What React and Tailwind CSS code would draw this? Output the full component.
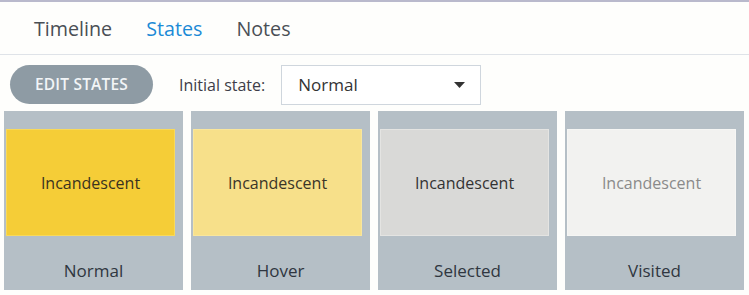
import React from "react";

const states = [
  { label: "Normal", bg: "bg-[#f5cd37]", border: "border-[#f8d95a]", text: "text-[#3a3320]" },
  { label: "Hover", bg: "bg-[#f7e08a]", border: "border-[#f9e69c]", text: "text-[#3a3528]" },
  { label: "Selected", bg: "bg-[#d9d9d7]", border: "border-[#e4e4e2]", text: "text-[#333333]" },
  { label: "Visited", bg: "bg-[#f2f2f0]", border: "border-[#f6f6f4]", text: "text-[#8a8a8a]" },
];

export default function App() {
  return (
    <div className="w-[749px] h-[295px] bg-[#fefefc] overflow-hidden border-t-2 border-[#b9b9cc]" style={{ fontFamily: '"Open Sans", "Noto Sans", sans-serif' }}>
      <div className="h-[53px] flex items-center gap-[34px] pl-[34px] border-b border-[#dfe3e8] pt-[1px]">
        <span className="text-[19.7px] text-[#4a4f55]">Timeline</span>
        <span className="text-[19.7px] text-[#1b8ad6]">States</span>
        <span className="text-[19.7px] text-[#4a4f55]">Notes</span>
      </div>
      <div className="flex items-center h-[56px] pt-[3px] pl-[10px]">
        <button className="w-[143px] h-[39px] rounded-full bg-[#8e9ba4] text-[#f2f5f7] text-[15.5px] font-semibold tracking-[0.2px]">EDIT STATES</button>
        <span className="ml-[26px] text-[16px] text-[#3d3d48]">Initial state:</span>
        <div className="ml-[16px] w-[200px] h-[40px] border border-[#cfd6dd] flex items-center justify-between pl-[16px] pr-[15px] bg-white">
          <span className="text-[17px] text-[#333]">Normal</span>
          <svg width="11" height="6" viewBox="0 0 11 6"><path d="M0 0h11L5.5 6z" fill="#333" /></svg>
        </div>
      </div>
      <div className="flex gap-[8px] pl-[4px]">
        {states.map((s) => (
          <div key={s.label} className="w-[179px] h-[179px] bg-[#b5bfc6] flex flex-col pt-[18px] pl-[2px] pr-[8px]">
            <div className={`h-[107px] w-[169px] border ${s.bg} ${s.border} flex items-center justify-center`}>
              <span className={`text-[16px] ${s.text}`}>Incandescent</span>
            </div>
            <div className="flex-1 flex items-center justify-center pl-[6px] pt-[16px]">
              <span className="text-[17px] text-[#2f3640]">{s.label}</span>
            </div>
          </div>
        ))}
      </div>
    </div>
  );
}
